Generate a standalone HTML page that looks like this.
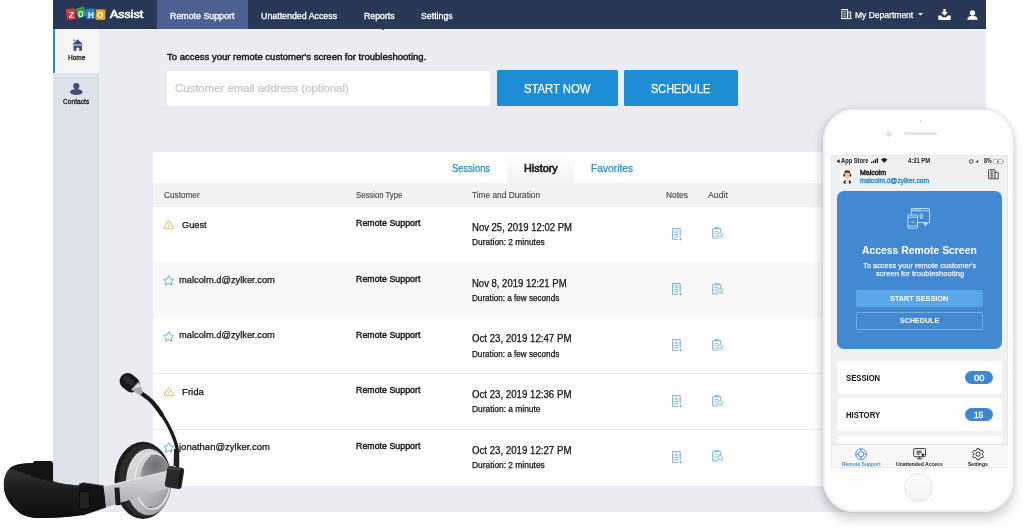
<!DOCTYPE html>
<html><head><meta charset="utf-8">
<style>
*{margin:0;padding:0;box-sizing:border-box}
html,body{width:1024px;height:530px;overflow:hidden;background:#fff;font-family:"Liberation Sans",sans-serif;color:#222}
.a{position:absolute}
.t{position:absolute;white-space:nowrap;line-height:1;transform-origin:0 0;-webkit-text-stroke:0.25px}
svg{position:absolute;overflow:visible}
</style></head><body><div class="a" style="left:0;top:0;width:1024px;height:530px;will-change:transform;overflow:hidden">
<div class="a" style="left:53.200px;top:0;width:933.200px;height:511.800px;background:#ebecf1"></div>
<div class="a" style="left:53.200px;top:0;width:933.200px;height:28.800px;background:#2a3858"></div>
<div class="a" style="left:157px;top:0;width:90.800px;height:28.8px;background:#4c6091"></div>
<div class="a" style="left:53.2px;top:28.8px;width:46px;height:483px;background:#dde1ea;border-right:1px solid #d7dbe4;box-shadow:1px 0 0 #eeeff6"></div>
<div class="a" style="left:53.2px;top:28.8px;width:46px;height:43.8px;background:#f5f5f6;border-left:2.4px solid #2b8ad3"></div>
<div class="a" style="left:99.200px;top:28.800px;width:887.200px;height:2px;background:linear-gradient(#f3f4f8,#ebecf1)"></div>
<div class="a" style="left:382.200px;top:28.600px;width:1.800px;height:1.400px;background:#2a3858;border-radius:0 0 1px 1px"></div>
<svg style="left:60px;top:0px" width="60" height="29" viewBox="60 0 60 29">
<rect x="66.500" y="8.600" width="8.600" height="11" rx="0.500" fill="#d9353c" transform="rotate(-7 70.800 14.100)"/>
<rect x="76.400" y="7.400" width="9" height="10.200" rx="0.500" fill="#2e9f4a" transform="rotate(-18 80.900 12.500)"/>
<rect x="85.700" y="8.700" width="9.400" height="10.200" rx="0.500" fill="#2c80c8" transform="rotate(-4 90.400 13.800)"/>
<rect x="95.700" y="9.300" width="9.600" height="10.500" rx="0.500" fill="#eaa624" transform="rotate(2 100.500 14.500)"/>
</svg>
<div class="t" style="left:68.70px;top:10.78px;font-size:9px;font-weight:bold;color:#fff;transform:scaleX(0.9095);-webkit-text-stroke:0;">Z</div>
<div class="t" style="left:78.40px;top:10.22px;font-size:8.6px;font-weight:bold;color:#fff;transform:scaleX(0.8073);-webkit-text-stroke:0;">O</div>
<div class="t" style="left:87.80px;top:10.85px;font-size:8.8px;font-weight:bold;color:#fff;transform:scaleX(0.9126);-webkit-text-stroke:0;">H</div>
<div class="t" style="left:97.10px;top:10.98px;font-size:9px;font-weight:bold;color:#fff;transform:scaleX(0.8857);-webkit-text-stroke:0;">O</div>
<div class="t" style="left:110.30px;top:9.33px;font-size:11.3px;font-weight:normal;color:#fff;transform:scaleX(1.0983);-webkit-text-stroke:0.6px #fff;">Assist</div>
<div class="t" style="left:170.10px;top:10.82px;font-size:9.9px;font-weight:normal;color:#fff;transform:scaleX(0.8947);-webkit-text-stroke:0.35px;">Remote Support</div>
<div class="t" style="left:260.70px;top:10.82px;font-size:9.9px;font-weight:normal;color:#fff;transform:scaleX(0.8944);-webkit-text-stroke:0.35px;">Unattended Access</div>
<div class="t" style="left:363.90px;top:10.82px;font-size:9.9px;font-weight:normal;color:#fff;transform:scaleX(0.8856);-webkit-text-stroke:0.35px;">Reports</div>
<div class="t" style="left:421.30px;top:10.82px;font-size:9.9px;font-weight:normal;color:#fff;transform:scaleX(0.8862);-webkit-text-stroke:0.35px;">Settings</div>
<div class="t" style="left:854.90px;top:11.11px;font-size:9.2px;font-weight:normal;color:#fff;transform:scaleX(0.9270);">My Department</div>
<svg style="left:840.5px;top:9px" width="11" height="10" viewBox="0 0 11 10" fill="none" stroke="#fff" stroke-width="0.9">
<rect x="0.9" y="0.5" width="5.6" height="9"/><rect x="6.5" y="3" width="3.2" height="6.5"/>
<path d="M2.2 2.3h3M2.2 4.1h3M2.2 5.9h3M2.2 7.7h3M7.4 5h1.4M7.4 7h1.4" stroke-width="0.7"/><path d="M0 9.6h11"/></svg>
<svg style="left:918px;top:13px" width="5" height="3" viewBox="0 0 5 3"><path d="M0 0h5L2.5 2.6z" fill="#fff"/></svg>
<svg style="left:937.5px;top:9px" width="13" height="11" viewBox="0 0 13 11" fill="#fff">
<path d="M5.300 0h2.400v3.300h2.100L6.500 6.700 3.200 3.300h2.100z"/><path d="M0.300 6.500h3.100l1.100 1.700h4l1.100-1.700h3.100v3.700q0 .8-.8.800H1.100q-.8 0-.8-.8z"/></svg>
<svg style="left:967px;top:10px" width="11" height="10" viewBox="0 0 11 10" fill="#fff">
<circle cx="5.5" cy="2.9" r="2.7"/><path d="M0.3 9.8c0-2.6 2.2-4 5.2-4s5.2 1.4 5.2 4z"/></svg>
<svg style="left:71.500px;top:39.200px" width="11.500" height="12" viewBox="0 0 11.500 12" fill="#3d4c78">
<path d="M5.700 0.200L11 5.500H0.400z"/><path d="M1.500 6.400h8.500v5.400H7.200V8.700H4.400v3.100H1.500z"/><rect x="1.500" y="0.500" width="1.200" height="1.800"/></svg>
<div class="t" style="left:68.20px;top:54.84px;font-size:6.8px;font-weight:normal;color:#222;transform:scaleX(0.9537);-webkit-text-stroke:0.3px;">Home</div>
<svg style="left:69.8px;top:82.7px" width="12.6" height="12" viewBox="0 0 12.6 12" fill="#3d4c78">
<circle cx="6.3" cy="3.1" r="3.1"/><ellipse cx="6.3" cy="9" rx="6.3" ry="3"/></svg>
<div class="t" style="left:62.70px;top:99.24px;font-size:6.8px;font-weight:normal;color:#222;transform:scaleX(0.9801);-webkit-text-stroke:0.3px;">Contacts</div>
<div class="t" style="left:166.70px;top:52.06px;font-size:9.5px;font-weight:normal;color:#111;transform:scaleX(1.0013);-webkit-text-stroke:0.4px;">To access your remote customer's screen for troubleshooting.</div>
<div class="a" style="left:166.7px;top:70.5px;width:323.7px;height:35.5px;background:#fff;border-radius:2px"></div>
<div class="t" style="left:174.90px;top:83.31px;font-size:11.8px;font-weight:normal;color:#c6c6c6;transform:scaleX(0.9636);">Customer email address (optional)</div>
<div class="a" style="left:497px;top:70px;width:120.5px;height:36px;background:#1f8dd6;border-radius:1.5px"></div>
<div class="a" style="left:624px;top:70px;width:113.6px;height:36px;background:#1f8dd6;border-radius:1.5px"></div>
<div class="t" style="left:523.75px;top:82.40px;font-size:13px;font-weight:normal;color:#fff;transform:scaleX(0.8679);">START NOW</div>
<div class="t" style="left:650.90px;top:82.40px;font-size:13px;font-weight:normal;color:#fff;transform:scaleX(0.8376);">SCHEDULE</div>
<div class="a" style="left:153px;top:152px;width:833.4px;height:333.7px;background:#fff"></div>
<div class="a" style="left:507px;top:154px;width:67.200px;height:29px;background:linear-gradient(#fff,#f2f2f3)"></div>
<div class="a" style="left:153px;top:182.800px;width:833.4px;height:23.800px;background:#f2f2f3"></div>
<div class="a" style="left:153px;top:262px;width:833.4px;height:56px;background:#f8f8f8"></div>
<div class="a" style="left:153px;top:373.2px;width:833.4px;height:1px;background:#efefef"></div>
<div class="a" style="left:153px;top:429px;width:833.4px;height:1px;background:#efefef"></div>
<div class="t" style="left:452.20px;top:163.14px;font-size:10.7px;font-weight:normal;color:#2f8cc4;transform:scaleX(0.8775);">Sessions</div>
<div class="t" style="left:523.75px;top:163.14px;font-size:10.7px;font-weight:normal;color:#222;transform:scaleX(1.0138);-webkit-text-stroke:0.7px;">History</div>
<div class="t" style="left:590.60px;top:163.14px;font-size:10.7px;font-weight:normal;color:#2f8cc4;transform:scaleX(0.9590);">Favorites</div>
<div class="t" style="left:163.75px;top:190.98px;font-size:9px;font-weight:normal;color:#4a4a4a;transform:scaleX(0.9138);-webkit-text-stroke:0.15px;">Customer</div>
<div class="t" style="left:355.90px;top:190.98px;font-size:9px;font-weight:normal;color:#4a4a4a;transform:scaleX(0.8595);-webkit-text-stroke:0.15px;">Session Type</div>
<div class="t" style="left:472.20px;top:190.98px;font-size:9px;font-weight:normal;color:#4a4a4a;transform:scaleX(0.9240);-webkit-text-stroke:0.15px;">Time and Duration</div>
<div class="t" style="left:665.90px;top:190.98px;font-size:9px;font-weight:normal;color:#4a4a4a;transform:scaleX(0.9315);-webkit-text-stroke:0.15px;">Notes</div>
<div class="t" style="left:707.80px;top:190.98px;font-size:9px;font-weight:normal;color:#4a4a4a;transform:scaleX(0.9749);-webkit-text-stroke:0.15px;">Audit</div>
<svg style="left:163.1px;top:219.0px" width="12" height="10.6" viewBox="0 0 12 10.6" fill="none" stroke="#e3b35c" stroke-width="0.9" stroke-linejoin="round">
<path d="M4.68 2.60Q5.8 0.7 6.92 2.60L9.98 7.80Q11.1 9.7 8.90 9.70L2.70 9.70Q0.5 9.7 1.62 7.80z" stroke-width="1"/><path d="M5.800 5.300v2.900M5.800 3.500v0.900" stroke-width="1"/></svg>
<div class="t" style="left:181.90px;top:220.29px;font-size:9.7px;font-weight:normal;color:#111;transform:scaleX(0.9544);">Guest</div>
<div class="t" style="left:355.90px;top:218.17px;font-size:9.6px;font-weight:normal;color:#111;transform:scaleX(0.9212);-webkit-text-stroke:0.4px;">Remote Support</div>
<div class="t" style="left:472.00px;top:223.05px;font-size:10.1px;font-weight:normal;color:#111;transform:scaleX(0.9433);">Nov 25, 2019 12:02 PM</div>
<div class="t" style="left:472.00px;top:238.22px;font-size:8.6px;font-weight:normal;color:#111;transform:scaleX(0.9762);">Duration: 2 minutes</div>
<svg style="left:671.8px;top:227.6px" width="10.6" height="12.6" viewBox="0 0 10.6 12.6" fill="none" stroke="#62a4c8" stroke-width="0.9">
<path d="M8.2 8.6V0.6H0.6v10.6h5.6"/><path d="M2.2 3h4.4M2.2 4.8h4.4M2.2 6.6h4.4M2.2 8.4h4.4" stroke-width="0.7"/><path d="M8.6 9.8v2.6M7.3 11.1h2.6" stroke-width="0.8"/></svg>
<svg style="left:711.6px;top:227.3px" width="12" height="11.8" viewBox="0 0 12 11.8" fill="none" stroke="#69aed3" stroke-width="0.9">
<path d="M6 11H0.6V1.8h8.2v3.4"/><path d="M3 1.8V0.6h3.4v1.2" /><path d="M2.2 4.4h4.2M2.2 6.3h2.6M2.2 8.2h2.4" stroke-width="0.7"/><circle cx="8" cy="7.8" r="2.3"/><path d="M9.7 9.5l1.7 1.7"/></svg>
<svg style="left:163.2px;top:275.1px" width="11.4" height="10.8" viewBox="0 0 11.4 10.8" fill="none" stroke="#58a9cc" stroke-width="0.9" stroke-linejoin="round">
<path d="M5.7 0.7l1.5 3.2 3.5 0.45-2.55 2.4 0.65 3.45L5.7 8.5 2.6 10.2l0.65-3.45L0.7 4.35l3.5-0.45z"/></svg>
<div class="t" style="left:179.00px;top:274.71px;font-size:9.7px;font-weight:normal;color:#111;transform:scaleX(0.9613);">malcolm.d@zylker.com</div>
<div class="t" style="left:355.90px;top:273.89px;font-size:9.6px;font-weight:normal;color:#111;transform:scaleX(0.9212);-webkit-text-stroke:0.4px;">Remote Support</div>
<div class="t" style="left:472.00px;top:278.77px;font-size:10.1px;font-weight:normal;color:#111;transform:scaleX(0.9413);">Nov 8, 2019 12:21 PM</div>
<div class="t" style="left:472.00px;top:293.94px;font-size:8.6px;font-weight:normal;color:#111;transform:scaleX(0.9462);">Duration: a few seconds</div>
<svg style="left:671.8px;top:283.3px" width="10.6" height="12.6" viewBox="0 0 10.6 12.6" fill="none" stroke="#62a4c8" stroke-width="0.9">
<path d="M8.2 8.6V0.6H0.6v10.6h5.6"/><path d="M2.2 3h4.4M2.2 4.8h4.4M2.2 6.6h4.4M2.2 8.4h4.4" stroke-width="0.7"/><path d="M8.6 9.8v2.6M7.3 11.1h2.6" stroke-width="0.8"/></svg>
<svg style="left:711.6px;top:283.0px" width="12" height="11.8" viewBox="0 0 12 11.8" fill="none" stroke="#69aed3" stroke-width="0.9">
<path d="M6 11H0.6V1.8h8.2v3.4"/><path d="M3 1.8V0.6h3.4v1.2" /><path d="M2.2 4.4h4.2M2.2 6.3h2.6M2.2 8.2h2.4" stroke-width="0.7"/><circle cx="8" cy="7.8" r="2.3"/><path d="M9.7 9.5l1.7 1.7"/></svg>
<svg style="left:163.2px;top:330.8px" width="11.4" height="10.8" viewBox="0 0 11.4 10.8" fill="none" stroke="#58a9cc" stroke-width="0.9" stroke-linejoin="round">
<path d="M5.7 0.7l1.5 3.2 3.5 0.45-2.55 2.4 0.65 3.45L5.7 8.5 2.6 10.2l0.65-3.45L0.7 4.35l3.5-0.45z"/></svg>
<div class="t" style="left:179.00px;top:330.43px;font-size:9.7px;font-weight:normal;color:#111;transform:scaleX(0.9613);">malcolm.d@zylker.com</div>
<div class="t" style="left:355.90px;top:329.61px;font-size:9.6px;font-weight:normal;color:#111;transform:scaleX(0.9212);-webkit-text-stroke:0.4px;">Remote Support</div>
<div class="t" style="left:472.00px;top:334.49px;font-size:10.1px;font-weight:normal;color:#111;transform:scaleX(0.9579);">Oct 23, 2019 12:47 PM</div>
<div class="t" style="left:472.00px;top:349.66px;font-size:8.6px;font-weight:normal;color:#111;transform:scaleX(0.9462);">Duration: a few seconds</div>
<svg style="left:671.8px;top:339.0px" width="10.6" height="12.6" viewBox="0 0 10.6 12.6" fill="none" stroke="#62a4c8" stroke-width="0.9">
<path d="M8.2 8.6V0.6H0.6v10.6h5.6"/><path d="M2.2 3h4.4M2.2 4.8h4.4M2.2 6.6h4.4M2.2 8.4h4.4" stroke-width="0.7"/><path d="M8.6 9.8v2.6M7.3 11.1h2.6" stroke-width="0.8"/></svg>
<svg style="left:711.6px;top:338.7px" width="12" height="11.8" viewBox="0 0 12 11.8" fill="none" stroke="#69aed3" stroke-width="0.9">
<path d="M6 11H0.6V1.8h8.2v3.4"/><path d="M3 1.8V0.6h3.4v1.2" /><path d="M2.2 4.4h4.2M2.2 6.3h2.6M2.2 8.2h2.4" stroke-width="0.7"/><circle cx="8" cy="7.8" r="2.3"/><path d="M9.7 9.5l1.7 1.7"/></svg>
<svg style="left:163.1px;top:386.2px" width="12" height="10.6" viewBox="0 0 12 10.6" fill="none" stroke="#e3b35c" stroke-width="0.9" stroke-linejoin="round">
<path d="M4.68 2.60Q5.8 0.7 6.92 2.60L9.98 7.80Q11.1 9.7 8.90 9.70L2.70 9.70Q0.5 9.7 1.62 7.80z" stroke-width="1"/><path d="M5.800 5.300v2.900M5.800 3.500v0.900" stroke-width="1"/></svg>
<div class="t" style="left:181.90px;top:387.45px;font-size:9.7px;font-weight:normal;color:#111;transform:scaleX(0.9954);">Frida</div>
<div class="t" style="left:355.90px;top:385.33px;font-size:9.6px;font-weight:normal;color:#111;transform:scaleX(0.9212);-webkit-text-stroke:0.4px;">Remote Support</div>
<div class="t" style="left:472.00px;top:390.21px;font-size:10.1px;font-weight:normal;color:#111;transform:scaleX(0.9579);">Oct 23, 2019 12:36 PM</div>
<div class="t" style="left:472.00px;top:405.38px;font-size:8.6px;font-weight:normal;color:#111;transform:scaleX(0.9748);">Duration: a minute</div>
<svg style="left:671.8px;top:394.8px" width="10.6" height="12.6" viewBox="0 0 10.6 12.6" fill="none" stroke="#62a4c8" stroke-width="0.9">
<path d="M8.2 8.6V0.6H0.6v10.6h5.6"/><path d="M2.2 3h4.4M2.2 4.8h4.4M2.2 6.6h4.4M2.2 8.4h4.4" stroke-width="0.7"/><path d="M8.6 9.8v2.6M7.3 11.1h2.6" stroke-width="0.8"/></svg>
<svg style="left:711.6px;top:394.5px" width="12" height="11.8" viewBox="0 0 12 11.8" fill="none" stroke="#69aed3" stroke-width="0.9">
<path d="M6 11H0.6V1.8h8.2v3.4"/><path d="M3 1.8V0.6h3.4v1.2" /><path d="M2.2 4.4h4.2M2.2 6.3h2.6M2.2 8.2h2.4" stroke-width="0.7"/><circle cx="8" cy="7.8" r="2.3"/><path d="M9.7 9.5l1.7 1.7"/></svg>
<svg style="left:163.2px;top:442.3px" width="11.4" height="10.8" viewBox="0 0 11.4 10.8" fill="none" stroke="#58a9cc" stroke-width="0.9" stroke-linejoin="round">
<path d="M5.7 0.7l1.5 3.2 3.5 0.45-2.55 2.4 0.65 3.45L5.7 8.5 2.6 10.2l0.65-3.45L0.7 4.35l3.5-0.45z"/></svg>
<div class="t" style="left:179.00px;top:441.87px;font-size:9.7px;font-weight:normal;color:#111;transform:scaleX(0.9797);">jonathan@zylker.com</div>
<div class="t" style="left:355.90px;top:441.05px;font-size:9.6px;font-weight:normal;color:#111;transform:scaleX(0.9212);-webkit-text-stroke:0.4px;">Remote Support</div>
<div class="t" style="left:472.00px;top:445.93px;font-size:10.1px;font-weight:normal;color:#111;transform:scaleX(0.9579);">Oct 23, 2019 12:27 PM</div>
<div class="t" style="left:472.00px;top:461.10px;font-size:8.6px;font-weight:normal;color:#111;transform:scaleX(0.9762);">Duration: 2 minutes</div>
<svg style="left:671.8px;top:450.5px" width="10.6" height="12.6" viewBox="0 0 10.6 12.6" fill="none" stroke="#62a4c8" stroke-width="0.9">
<path d="M8.2 8.6V0.6H0.6v10.6h5.6"/><path d="M2.2 3h4.4M2.2 4.8h4.4M2.2 6.6h4.4M2.2 8.4h4.4" stroke-width="0.7"/><path d="M8.6 9.8v2.6M7.3 11.1h2.6" stroke-width="0.8"/></svg>
<svg style="left:711.6px;top:450.2px" width="12" height="11.8" viewBox="0 0 12 11.8" fill="none" stroke="#69aed3" stroke-width="0.9">
<path d="M6 11H0.6V1.8h8.2v3.4"/><path d="M3 1.8V0.6h3.4v1.2" /><path d="M2.2 4.4h4.2M2.2 6.3h2.6M2.2 8.2h2.4" stroke-width="0.7"/><circle cx="8" cy="7.8" r="2.3"/><path d="M9.7 9.5l1.7 1.7"/></svg>
<div class="a" style="left:823px;top:108.500px;width:191.400px;height:403.600px;border-radius:31px;background:#fdfdfd;box-shadow:0 8px 12px rgba(40,45,60,.19),-2px 1px 9px rgba(40,45,60,.10),0 0 3px rgba(40,45,60,.10), inset 0 0 0 1.600px #f0f0f0, inset 0 0 3px 1px rgba(0,0,0,.06)"></div>
<div class="a" style="left:831.500px;top:156px;width:175.600px;height:311.300px;background:#f0f0f1;box-shadow:0 0 0 0.6px #d9d9d9;overflow:hidden"></div>
<div class="a" style="left:919.6px;top:120.3px;width:1.6px;height:1.6px;border-radius:50%;background:#c9c9c9"></div>
<div class="a" style="left:885.6px;top:130.6px;width:6px;height:6px;border-radius:50%;background:#e3e3e3;border:1px solid #ececec"></div>
<div class="a" style="left:903.5px;top:132.4px;width:33.5px;height:2.4px;border-radius:2px;background:#e6e6e6"></div>
<div class="a" style="left:904.4px;top:473.3px;width:28.6px;height:28.6px;border-radius:50%;background:linear-gradient(#fafafa,#f4f4f4);border:1px solid #e9e9e9;box-shadow:inset 0 0 2px rgba(0,0,0,.06)"></div>
<div class="t" style="left:840.90px;top:158.07px;font-size:6.3px;font-weight:bold;color:#222;transform:scaleX(0.9136);-webkit-text-stroke:0;">App Store</div>
<svg style="left:836.2px;top:158.8px" width="4" height="4.4" viewBox="0 0 4 4.4"><path d="M3.6 0.2v4L0.4 2.2z" fill="#222"/></svg>
<svg style="left:871.1px;top:158.300px" width="17.600" height="5.300" viewBox="0 0 16.600 5" fill="#222"><rect x="0" y="3.4" width="1.2" height="1.4"/><rect x="1.8" y="2.4" width="1.2" height="2.4"/><rect x="3.6" y="1.2" width="1.2" height="3.6"/><rect x="5.4" y="0" width="1.2" height="4.8"/><path d="M12.500 4.800L9.400 1.500a4.500 4.500 0 0 1 6.200 0z"/></svg>
<div class="t" style="left:908.30px;top:158.07px;font-size:6.3px;font-weight:bold;color:#222;transform:scaleX(0.9282);-webkit-text-stroke:0;">4:31 PM</div>
<div class="t" style="left:984.00px;top:158.07px;font-size:6.3px;font-weight:bold;color:#222;transform:scaleX(0.8347);-webkit-text-stroke:0;">8%</div>
<svg style="left:969px;top:158.800px" width="13" height="5" viewBox="0 0 13 5" fill="none" stroke="#222" stroke-width="0.8"><circle cx="2.2" cy="2.5" r="1.8"/><path d="M6.2 3.4L9.6 0.6 8.4 4.6 7.8 3z" fill="#222" stroke="none"/></svg>
<svg style="left:993.200px;top:158.800px" width="11" height="5" viewBox="0 0 11 5"><rect x="0.4" y="0.4" width="9" height="4.2" rx="1.3" fill="#fff" stroke="#888" stroke-width="0.6"/><rect x="9.8" y="1.6" width="0.8" height="1.8" fill="#888"/><path d="M5.4 0.8L3.8 2.7h1.1L4.5 4.2 6.2 2.3H5z" fill="#222"/></svg>
<svg style="left:839.400px;top:168px" width="16.400" height="16.400" viewBox="0 0 16.400 16.400"><defs><clipPath id="av"><circle cx="8.200" cy="8.200" r="7.800"/></clipPath></defs><circle cx="8.200" cy="8.200" r="8" fill="#fdfdfd" stroke="#e6e6ea" stroke-width="0.500"/><g clip-path="url(#av)"><path d="M4 16.400c0-3.400 1.600-4.600 4.300-4.600s4.300 1.200 4.300 4.600z" fill="#3b2a22"/><path d="M6.900 10.500h2.800l.5 5.900H6.400z" fill="#f6e6cf"/><ellipse cx="8.300" cy="7" rx="2.900" ry="3.600" fill="#efc49c"/><path d="M5.200 6.800c-.4-3.300 1.200-4.500 3.100-4.500s3.500 1.200 3.100 4.500c-.5-1.600-1.300-2.300-3.100-2.300s-2.600.7-3.100 2.300z" fill="#4a2f20"/><ellipse cx="5.100" cy="7.400" rx="0.800" ry="1.300" fill="#3a2418"/><ellipse cx="11.500" cy="7.400" rx="0.800" ry="1.300" fill="#3a2418"/></g></svg>
<div class="t" style="left:860.00px;top:168.71px;font-size:7.2px;font-weight:normal;color:#222;transform:scaleX(0.9700);-webkit-text-stroke:0.5px;">Malcolm</div>
<div class="t" style="left:860.00px;top:176.71px;font-size:7.2px;font-weight:normal;color:#2f8cc4;transform:scaleX(0.9335);-webkit-text-stroke:0.4px;">malcolm.d@zylker.com</div>
<svg style="left:987.800px;top:168.700px" width="10.800" height="10.400" viewBox="0 0 10.800 10.400" fill="none" stroke="#333" stroke-width="0.900"><rect x="0.600" y="0.600" width="6.400" height="9.200" rx="0.600"/><path d="M7 3.400h2.600q.6 0 .6.600v5.800H7"/><path d="M2 2.400h3.600M2 4.300h3.600M2 6.200h3.600M2 8.100h3.600M3.800 1.600v7.200M8.600 5.200v.1M8.600 7.200v.1" stroke-width="0.600"/></svg>
<div class="a" style="left:836.6px;top:191.2px;width:165.4px;height:158.2px;border-radius:7px;background:#4289d2"></div>
<svg style="left:907px;top:208.400px" width="25" height="21" viewBox="0 0 25 21" fill="none" stroke="#dcebfa" stroke-width="0.800"><rect x="4.200" y="0.600" width="18.400" height="14" rx="0.500"/><path d="M4.200 2.800h18.400"/><path d="M5.400 1.700h9" stroke-width="0.600" opacity=".7"/><rect x="0.900" y="7" width="9.600" height="13.200" rx="0.800" fill="#4289d2"/><path d="M0.900 9.200h9.600M0.900 18h9.600"/><path d="M4.300 13.600l1.100 1.100 1.800-2" stroke="#fff"/><ellipse cx="14.300" cy="8.300" rx="1.700" ry="2.800" fill="#8db9e6" stroke="#a9cbee" stroke-width="0.500"/><path d="M16.400 14.400l4.800 1.300-2 .9-.7 2z" fill="#f2f7fd" stroke="none"/></svg>
<div class="t" style="left:862.00px;top:245.23px;font-size:10.6px;font-weight:bold;color:#fff;transform:scaleX(0.9791);-webkit-text-stroke:0;">Access Remote Screen</div>
<div class="t" style="left:862.90px;top:261.87px;font-size:7.6px;font-weight:normal;color:#e9f2fb;transform:scaleX(0.9846);">To access your remote customer's</div>
<div class="t" style="left:876.40px;top:269.87px;font-size:7.6px;font-weight:normal;color:#e9f2fb;transform:scaleX(1.0037);">screen for troubleshooting</div>
<div class="a" style="left:855.9px;top:290.1px;width:127.3px;height:16.7px;border-radius:2px;background:#5aa7e8"></div>
<div class="t" style="left:890.20px;top:295.84px;font-size:6.8px;font-weight:bold;color:#fff;transform:scaleX(1.0759);-webkit-text-stroke:0;">START SESSION</div>
<div class="a" style="left:855.9px;top:312.2px;width:127.3px;height:17.4px;border-radius:2px;border:0.7px solid #74a9e2"></div>
<div class="t" style="left:899.80px;top:318.24px;font-size:6.8px;font-weight:bold;color:#fff;transform:scaleX(1.0480);-webkit-text-stroke:0;">SCHEDULE</div>
<div class="a" style="left:836.5px;top:361.2px;width:165.6px;height:32.7px;border-radius:4px;background:#fff"></div>
<div class="a" style="left:836.5px;top:398.4px;width:165.6px;height:32.7px;border-radius:4px;background:#fff"></div>
<div class="a" style="left:836.5px;top:435.6px;width:165.6px;height:14px;border-radius:4px;background:#fff"></div>
<div class="t" style="left:846.20px;top:373.62px;font-size:8.6px;font-weight:bold;color:#111;transform:scaleX(0.8945);-webkit-text-stroke:0;">SESSION</div>
<div class="t" style="left:846.20px;top:410.62px;font-size:8.6px;font-weight:bold;color:#111;transform:scaleX(0.9059);-webkit-text-stroke:0;">HISTORY</div>
<div class="a" style="left:964.8px;top:370.9px;width:28.1px;height:13.6px;border-radius:7px;background:#3f86d0"></div>
<div class="a" style="left:964.8px;top:407.9px;width:28.1px;height:13.6px;border-radius:7px;background:#3f86d0"></div>
<div class="t" style="left:973.80px;top:373.79px;font-size:8.4px;font-weight:normal;color:#fff;transform:scaleX(1.1238);-webkit-text-stroke:0.35px;">00</div>
<div class="t" style="left:974.30px;top:410.69px;font-size:8.4px;font-weight:normal;color:#fff;transform:scaleX(0.9846);-webkit-text-stroke:0.35px;">15</div>
<div class="a" style="left:831.5px;top:444.4px;width:176px;height:22.8px;background:#f7f7f8;border-top:0.6px solid #e2e2e2"></div>
<svg style="left:855.100px;top:447.500px" width="12.200" height="12.200" viewBox="0 0 10.4 10.4" fill="none" stroke="#4a8fd3" stroke-width="0.8"><circle cx="5.2" cy="5.2" r="4.6"/><circle cx="5.2" cy="5.2" r="2.300"/><path d="M5.200 0.600v2.300M5.200 7.500v2.300M0.600 5.200h2.300M7.500 5.200h2.300"/></svg>
<svg style="left:912.700px;top:447.700px" width="13.200" height="11.500" viewBox="0 0 12 10.4" fill="none" stroke="#222" stroke-width="0.8"><rect x="0.6" y="0.5" width="10.8" height="7.4" rx="1.2"/><path d="M3.2 2.8h4.6M3.2 4.2h4.6M3.2 5.6h3"/><path d="M3.6 9.8h4.8M6 8v1.8"/><path d="M8 5.2l2.4.8-1 .5-.4 1z" fill="#222"/></svg>
<svg style="left:971.600px;top:447.500px" width="12.200" height="12.200" viewBox="0 0 10.8 10.8" fill="none" stroke="#222" stroke-width="0.8" stroke-linejoin="round"><circle cx="5.4" cy="5.4" r="1.9"/><path d="M4.4 0.6h2l.4 1.3 1.2.7 1.3-.4 1 1.7-1 .9v1.4l1 .9-1 1.7-1.3-.4-1.2.7-.4 1.3h-2L4 9.1l-1.2-.7-1.3.4-1-1.7 1-.9V4.800l-1-.9 1-1.700 1.300.4 1.200-.7z"/></svg>
<div class="t" style="left:841.60px;top:461.67px;font-size:5.7px;font-weight:bold;color:#4a8fd3;transform:scaleX(0.8729);-webkit-text-stroke:0;">Remote Support</div>
<div class="t" style="left:895.80px;top:461.67px;font-size:5.7px;font-weight:bold;color:#222;transform:scaleX(0.8882);-webkit-text-stroke:0;">Unattended Access</div>
<div class="t" style="left:967.60px;top:461.67px;font-size:5.7px;font-weight:bold;color:#222;transform:scaleX(0.8805);-webkit-text-stroke:0;">Settings</div>
<svg style="left:0;top:360px" width="210" height="170" viewBox="0 360 210 170">
<defs>
<linearGradient id="sil" x1="0" y1="0" x2="1" y2="1"><stop offset="0" stop-color="#e9e9eb"/><stop offset="0.5" stop-color="#bdbec1"/><stop offset="1" stop-color="#909194"/></linearGradient>
<linearGradient id="arm" x1="0" y1="0" x2="0" y2="1"><stop offset="0" stop-color="#d9d9db"/><stop offset="0.5" stop-color="#c4c4c7"/><stop offset="1" stop-color="#a9aaad"/></linearGradient>
<linearGradient id="band" x1="0" y1="0" x2="0" y2="1"><stop offset="0" stop-color="#343434"/><stop offset="0.4" stop-color="#1e1e1e"/><stop offset="1" stop-color="#0e0e0e"/></linearGradient>
<radialGradient id="rec" cx="0.55" cy="0.4" r="0.7"><stop offset="0" stop-color="#6f7073"/><stop offset="1" stop-color="#9d9ea1"/></radialGradient>
</defs>
<!-- back of band -->
<path d="M32.900 463.500q0-2.500 2.500-2.500h15q2.500 0 2.500 2.500v19H32.900z" fill="#161616"/>
<!-- ear cup -->
<ellipse cx="143" cy="480.300" rx="28.500" ry="38.600" fill="#1c1c1c"/>
<ellipse cx="144.500" cy="480.800" rx="25.500" ry="36.500" fill="#2b2b2b"/>
<ellipse cx="148.700" cy="482" rx="22.700" ry="33.200" fill="url(#sil)"/>
<ellipse cx="152.500" cy="481" rx="17.500" ry="28" fill="none" stroke="#ececee" stroke-width="1.400" opacity=".9"/>
<path d="M150.500 455.500C158 451.500 168.500 459 169.500 470L168.500 476 139 483C138.500 471 142.500 460.500 150.500 455.500z" fill="url(#rec)"/>
<path d="M150.500 455.500C143 461 139.500 471 139.300 483" fill="none" stroke="#d8d8da" stroke-width="1.200"/>
<path d="M144 505c6 5 16 2 22-9-4 10-15 16-22 9z" fill="#2a2a2a"/>
<path d="M145.500 507.500c7 3 15-1 20-10" fill="none" stroke="#e2e2e4" stroke-width="1"/>
<!-- headband -->
<path d="M9.600 468.500C13 464.500 22 463 33 463L53 463 53 481C60 483.500 70 485 79.500 485.300L82.500 485 82.500 515C70 517 55 518 40 518 30 518 22 515.500 18 511.500 10 505 4.500 496 4 488 3.500 480 5 473 9.600 468.500z" fill="#141414"/>
<path d="M9.600 469.500C14 471 20 472.500 32 477.500 42 481 56 484.500 79.500 486.500L82.500 486 82.500 515C70 517 55 518 40 518 30 518 22 515.500 18 511.500 10 505 4.500 496 4 488 3.500 480 5 473 9.600 469.500z" fill="url(#band)"/>
<path d="M9.600 469C14 470.500 20 472 32 477 42 480.500 56 484 79.500 486" fill="none" stroke="#4a4a4a" stroke-width="1" stroke-dasharray="1.300 0.900"/>
<!-- connector -->
<path d="M79.300 483.800l4-1.100 20.900 3.200 1.800 21.600-23 8-3.500-1.500z" fill="#131313"/>
<path d="M83.300 482.700l20.900 3.200" stroke="#4d4d4d" stroke-width="0.800"/>
<rect x="79.300" y="491.500" width="10" height="17.500" fill="#232323" stroke="#050505" stroke-width="0.700"/>
<!-- arm -->
<path d="M103.500 486.600L168 471v17.600L106.400 507z" fill="url(#arm)"/>
<path d="M103.500 486.600L168 471" stroke="#efefef" stroke-width="0.800"/>
<rect x="115" y="487.600" width="5" height="17.600" fill="#1b1b1b" transform="rotate(-4 117.500 496)"/>
<!-- boom -->
<path d="M141.1 393C142.8 394.4 148.0 397.7 151.5 401.3C155.0 404.9 158.8 410.1 161.9 414.8C165.0 419.5 167.8 423.8 170.2 429.3C172.8 434.8 175.8 441.9 177 448C178 454.1 177.6 463.0 177.6 466" fill="none" stroke="#1a1a1a" stroke-width="3.300" stroke-linecap="round"/>
<path d="M141.1 393C142.8 394.4 148.0 397.7 151.5 401.3C155.0 404.9 158.8 410.1 161.9 414.8" fill="none" stroke="#1a1a1a" stroke-width="4.200" stroke-linecap="round"/>
<rect x="119.200" y="374.700" width="21" height="16" rx="7.500" fill="#171717" transform="rotate(40 129.700 382.700)"/>
<ellipse cx="128.600" cy="380.600" rx="6.500" ry="3" fill="#2c2c2c" transform="rotate(40 128.600 380.600)"/>
<path d="M130.900 389.700L138.600 381.500 143.200 392.300 140.200 395.600z" fill="#a9aaad"/>
<path d="M133.400 388.800l5.200-5.400 1.500 3.400z" fill="#e4e4e6"/>
<!-- joint -->
<path d="M176.600 449L176.200 466" stroke="#222" stroke-width="5.200" stroke-linecap="butt"/>
<rect x="166" y="466.800" width="17" height="21.500" rx="3" fill="#2a2a2a" transform="rotate(9 174.500 477.500)"/>
<path d="M168.500 468.200l13 1.800" stroke="#5a5a5a" stroke-width="1"/>
<path d="M181 470l-1.600 17" stroke="#111" stroke-width="2"/>
</svg>
</div></body></html>
